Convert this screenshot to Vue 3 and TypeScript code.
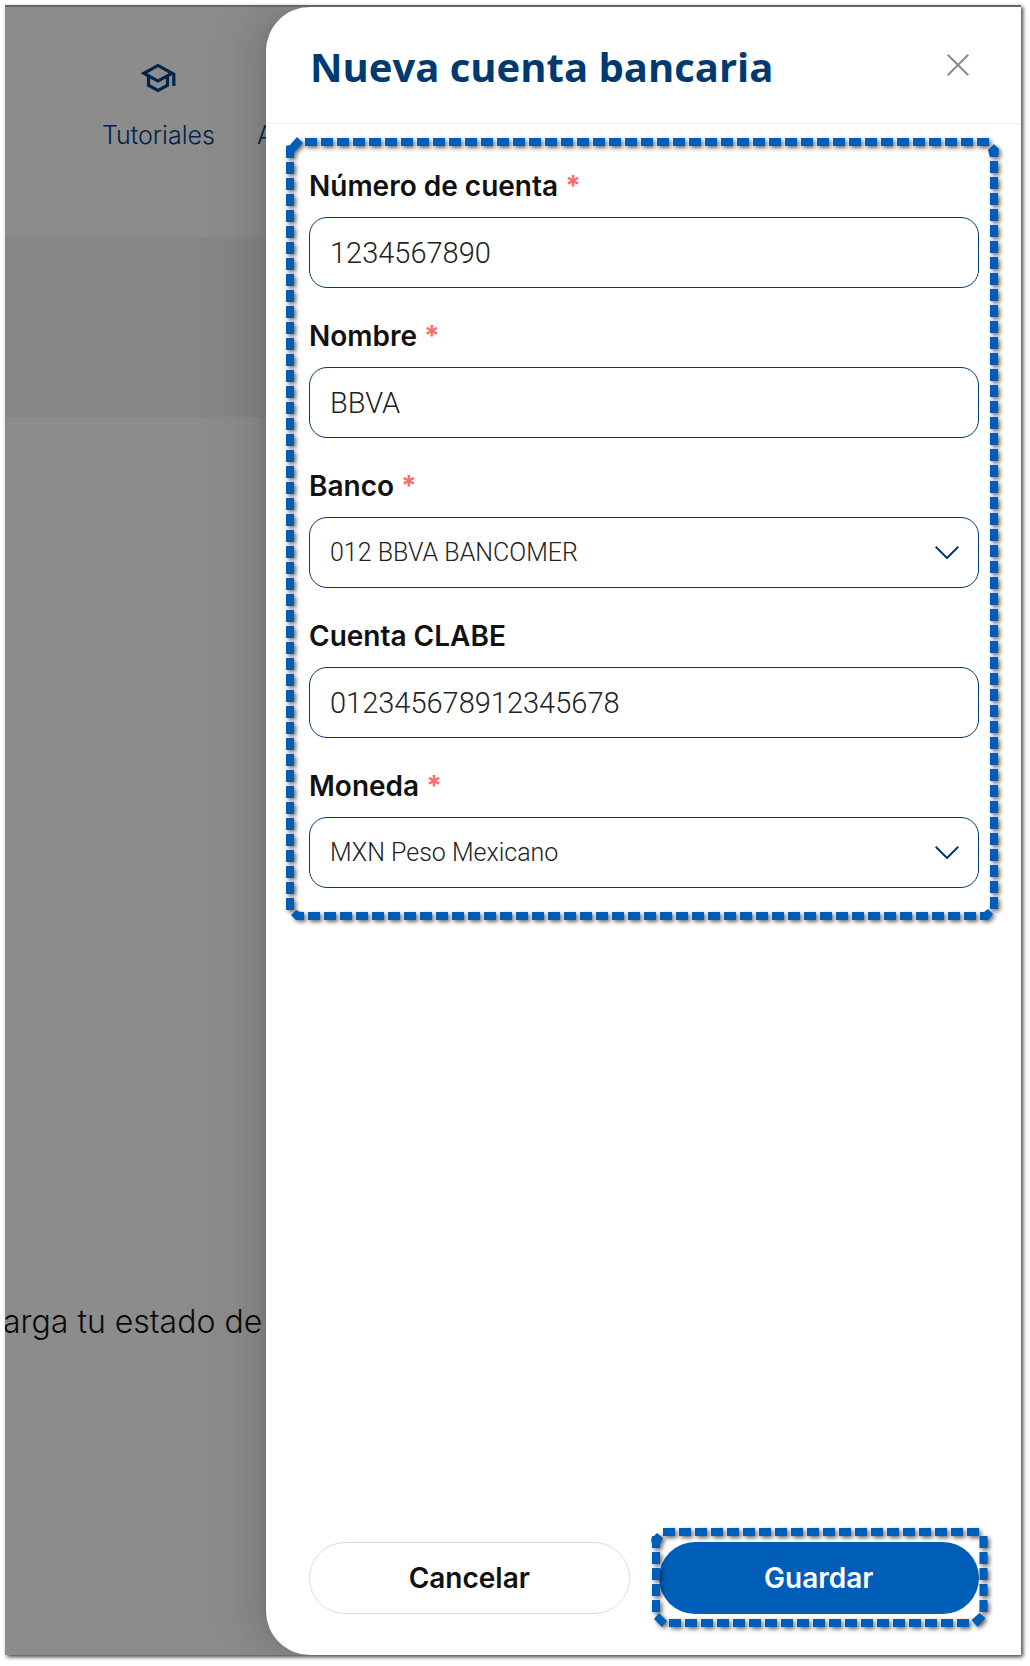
<script setup lang="ts">
import { ref } from 'vue'

interface Field {
  id: string
  label: string
  kind: 'text' | 'select'
  required: boolean
  value: string
}

interface Edge {
  x1: number | string
  y1: number | string
  x2: number | string
  y2: number | string
}

interface Corner {
  x: number | string
  y: number | string
  points: string
}

interface Outline {
  edges: Edge[]
  corners: Corner[]
}

const fields = ref<Field[]>([
  { id: 'numero', label: 'Número de cuenta', kind: 'text', required: true, value: '1234567890' },
  { id: 'nombre', label: 'Nombre', kind: 'text', required: true, value: 'BBVA' },
  { id: 'banco', label: 'Banco', kind: 'select', required: true, value: '012 BBVA BANCOMER' },
  { id: 'clabe', label: 'Cuenta CLABE', kind: 'text', required: false, value: '012345678912345678' },
  { id: 'moneda', label: 'Moneda', kind: 'select', required: true, value: 'MXN Peso Mexicano' }
])

// Dashed highlight around the form
const formOutline: Outline = {
  edges: [
    { x1: 15, y1: 0, x2: '99.5%', y2: 0 },
    { x1: '100%', y1: 19, x2: '100%', y2: '99.5%' },
    { x1: 18, y1: '100%', x2: '99%', y2: '100%' },
    { x1: 0, y1: 4, x2: 0, y2: '99.5%' }
  ],
  corners: [
    { x: 0, y: 0, points: '-4,4 0,3 7,-5 13,1 4,10 4,16 -4,16' },
    { x: '100%', y: 0, points: '-6,8 0,2 5,7 4,15 -4,15' },
    { x: '100%', y: '100%', points: '-14,-4 -10,-4 -6,-7 -1,-2 -6,4 -14,4' },
    { x: 0, y: '100%', points: '1,-1 6,-6 10,-4 14,-4 14,4 6,4' }
  ]
}

// Dashed highlight around the save button
const saveOutline: Outline = {
  edges: [
    { x1: 7, y1: 0, x2: '99.5%', y2: 0 },
    { x1: '100%', y1: 4, x2: '100%', y2: '90%' },
    { x1: 13, y1: '100%', x2: '96%', y2: '100%' },
    { x1: 0, y1: 4, x2: 0, y2: '90%' }
  ],
  corners: [
    { x: 0, y: 0, points: '-5,7 1,1 7,6 4,12 -4,12' },
    { x: '100%', y: '100%', points: '-12,-3 -4,-10 2,-5 -6,4' },
    { x: 0, y: '100%', points: '-2,-4 3,-10 11,-2 6,4' }
  ]
}
</script>

<template>
  <div class="frame">
    <div class="backdrop">
      <nav class="nav">
        <a class="nav-item" href="#tutoriales">
          <svg class="nav-icon" viewBox="0 0 24 24" aria-hidden="true">
            <path
              d="M12 3L1 9l4 2.18v6L12 21l7-3.82v-6l2-1.09V17h2V9L12 3zm6.82 6L12 12.72 5.18 9 12 5.28 18.82 9zM17 15.99l-5 2.73-5-2.73v-3.72L12 15l5-2.73v3.72z"
            />
          </svg>
          <span>Tutoriales</span>
        </a>
        <a class="nav-item" href="#a">A</a>
      </nav>
      <div class="banner"></div>
      <p class="hint">arga tu estado de</p>
    </div>

    <section class="drawer" role="dialog" aria-labelledby="drawer-title">
      <header class="drawer-head">
        <h1 id="drawer-title" class="title">Nueva cuenta bancaria</h1>
        <button class="close" type="button" aria-label="Cerrar">
          <svg viewBox="0 0 22 22" aria-hidden="true"><path d="M0.7 0.7L21.3 21.3M21.3 0.7L0.7 21.3" /></svg>
        </button>
      </header>

      <form class="form" @submit.prevent>
        <div class="fields">
          <div v-for="f in fields" :key="f.id" class="field">
            <label class="label" :for="f.id">
              {{ f.label }} <span v-if="f.required" class="req">*</span>
            </label>
            <input v-if="f.kind === 'text'" :id="f.id" v-model="f.value" class="control" type="text" />
            <div v-else class="select-wrap">
              <select :id="f.id" v-model="f.value" class="control select">
                <option>{{ f.value }}</option>
              </select>
              <svg class="chevron" viewBox="0 0 24 13" aria-hidden="true"><path d="M0.7 0.7L12 12L23.3 0.7" /></svg>
            </div>
          </div>
          <svg class="outline" aria-hidden="true">
            <line v-for="(e, i) in formOutline.edges" :key="'e' + i" v-bind="e" />
            <svg v-for="(c, i) in formOutline.corners" :key="'c' + i" class="corner" :x="c.x" :y="c.y">
              <polygon :points="c.points" />
            </svg>
          </svg>
        </div>

        <footer class="actions">
          <button class="btn cancel" type="button">Cancelar</button>
          <div class="save-wrap">
            <button class="btn save" type="submit">Guardar</button>
            <svg class="outline save-outline" aria-hidden="true">
              <line v-for="(e, i) in saveOutline.edges" :key="'e' + i" v-bind="e" />
              <svg v-for="(c, i) in saveOutline.corners" :key="'c' + i" class="corner" :x="c.x" :y="c.y">
                <polygon :points="c.points" />
              </svg>
            </svg>
          </div>
        </footer>
      </form>
    </section>
  </div>
</template>

<style>
body {
  background: #fff;
}
</style>

<style scoped>
*,
*::before,
*::after {
  box-sizing: border-box;
}

.frame {
  display: flex;
  min-height: calc(100vh - 16px);
  margin: 5px 9px 11px 5px;
  overflow: hidden;
  border-top: 2px solid #666;
  background: #8c8c8c;
  box-shadow: 2px 2px 4px rgba(0, 0, 0, 0.75);
  font-family: Inter, sans-serif;
}

.backdrop {
  display: flex;
  flex: 261 1 0;
  flex-direction: column;
  min-width: 0;
  overflow: hidden;
}

.nav {
  display: flex;
  align-items: flex-end;
  gap: 42px;
  height: 230px;
  padding: 0 0 86px 97px;
}

.banner {
  height: 180px;
  background: #868686;
}

.nav-item {
  display: flex;
  flex-direction: column;
  align-items: center;
  gap: 22px;
  color: #00234a;
  font-size: 25px;
  font-weight: 300;
  line-height: 32px;
  text-decoration: none;
}

.nav-icon {
  width: 38px;
  height: 38px;
  fill: #00234a;
}

.hint {
  margin: auto 0 311px -2px;
  color: #0a0a0a;
  font-size: 32px;
  font-weight: 300;
  line-height: 44px;
  white-space: nowrap;
}

.drawer {
  position: relative;
  display: flex;
  flex: 755 1 0;
  flex-direction: column;
  min-width: 0;
  border-radius: 44px 0 0 44px;
  background: #fff;
  box-shadow:
    -11px 0 29px rgba(0, 0, 0, 0.08),
    -5px 0 11px -7px rgba(0, 0, 0, 0.12),
    -16px 0 50px 14px rgba(0, 0, 0, 0.05);
}

.drawer-head {
  display: flex;
  align-items: center;
  justify-content: space-between;
  height: 117px;
  padding: 0 52px 0 44px;
  border-bottom: 1px solid #eee;
}

.title {
  margin: 0;
  padding-top: 4px;
  color: #003a70;
  font-family: 'Open Sans', sans-serif;
  font-size: 40px;
  font-weight: 700;
  line-height: 56px;
}

.close {
  display: flex;
  padding: 0;
  border: 0;
  background: none;
}

.close svg {
  width: 22px;
  height: 22px;
  overflow: visible;
  fill: none;
  stroke: #8a8a8a;
  stroke-width: 2;
}

.form {
  display: flex;
  flex: 1;
  flex-direction: column;
  justify-content: space-between;
  padding: 18px 27px 41px 24px;
}

.fields {
  position: relative;
  display: flex;
  flex-direction: column;
  gap: 28px;
  padding: 24px 15px 28px 19px;
}

.field {
  display: flex;
  flex-direction: column;
}

.label {
  height: 51px;
  color: #111;
  font-size: 28px;
  font-weight: 600;
  line-height: 40px;
}

.req {
  color: #ff6b6b;
  font-weight: 700;
}

.control {
  display: block;
  width: 100%;
  height: 71px;
  margin: 0;
  padding: 0 20px;
  border: 1px solid #003a70;
  border-radius: 18px;
  outline: none;
  background: #fff;
  color: #222;
  font-family: Roboto, sans-serif;
  font-size: 29px;
  font-weight: 300;
}

.select-wrap {
  position: relative;
}

.select {
  appearance: none;
  font-size: 25px;
}

.chevron {
  position: absolute;
  top: 29px;
  right: 20px;
  width: 24px;
  height: 13px;
  fill: none;
  stroke: #003a70;
  stroke-width: 2;
  pointer-events: none;
}

.outline {
  position: absolute;
  top: 0;
  left: 0;
  width: 100%;
  height: 100%;
  overflow: visible;
  pointer-events: none;
  filter: drop-shadow(2px 2px 2px rgba(0, 0, 0, 0.6));
}

.outline line {
  stroke: #005eb8;
  stroke-width: 8;
  stroke-dasharray: 12 4;
}

.corner {
  overflow: visible;
}

.corner polygon {
  fill: #005eb8;
}

.actions {
  display: grid;
  grid-template-columns: 1fr 1fr;
  gap: 29px;
  padding: 0 15px 0 19px;
}

.btn {
  display: block;
  width: 100%;
  height: 72px;
  padding: 0;
  border: 0;
  border-radius: 36px;
  font-family: Inter, sans-serif;
  font-size: 28px;
  font-weight: 600;
}

.cancel {
  border: 1px solid #cfe0f3;
  background: #fff;
  color: #111;
}

.save-wrap {
  position: relative;
}

.save {
  background: #005eb8;
  color: #fff;
}

.save-outline {
  top: -10px;
  left: -3px;
  width: calc(100% + 7px);
  height: calc(100% + 19px);
}
</style>
